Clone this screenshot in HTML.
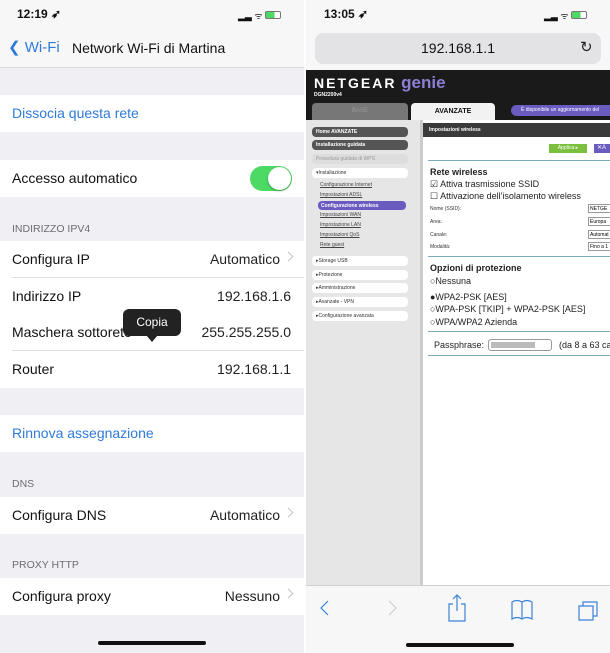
<!DOCTYPE html>
<html><head><meta charset="utf-8"><style>
*{margin:0;padding:0;box-sizing:border-box}
body{width:610px;height:653px;overflow:hidden;font-family:"Liberation Sans",sans-serif;background:#fff;position:relative}
.abs{position:absolute}
#L{left:0;top:0;width:304px;height:653px;background:#efeff4}
.row{position:absolute;left:0;width:304px;height:37px;background:#fff;font-size:14px;color:#111}
.row .t{position:absolute;left:12px;top:10px}
.row .v{position:absolute;right:13px;top:10px;color:#222}
.row .v.c{right:24px}
.row .ch{position:absolute;right:12px;top:12px;width:7px;height:7px;border-right:1.5px solid #c4c4c8;border-top:1.5px solid #c4c4c8;transform:rotate(45deg)}
.sep{position:absolute;left:12px;right:0;bottom:0;height:1px;background:#e0e0e3}
.hd{position:absolute;left:12px;font-size:10.5px;color:#6d6d72}
.blue{color:#2f7ad8!important}
#R{left:306px;top:0;width:304px;height:653px;background:#f7f7f7}
.side{position:absolute;left:6px;width:96px;height:10px;border-radius:4px;font-size:5px;padding:2px 4px;line-height:6px}
.sl{position:absolute;left:14px;font-size:5px;color:#444;text-decoration:underline}
</style></head><body>
<div id="L" class="abs">
 <div class="abs" style="left:0;top:0;width:304px;height:68px;background:#f7f7f7;border-bottom:1px solid #d8d8d8"></div>
 <div class="abs" style="left:17px;top:7px;font-size:12px;font-weight:bold;color:#111">12:19 ➶</div>
 <div class="abs" style="left:238px;top:9px;font-size:9px;color:#111">▂▃ ᯤ <span style="display:inline-block;width:16px;height:8px;border:1px solid #777;border-radius:2px;background:linear-gradient(90deg,#4cd964 60%,#fff 60%)"></span></div>
 <div class="abs blue" style="left:8px;top:38px;font-size:15px;">❮ Wi-Fi</div>
 <div class="abs" style="left:72px;top:40px;font-size:14px;color:#111">Network Wi-Fi di Martina</div>
 <div class="row" style="top:95px"><span class="t blue">Dissocia questa rete</span></div>
 <div class="row" style="top:160px"><span class="t">Accesso automatico</span>
  <div class="abs" style="left:250px;top:6px;width:42px;height:25px;border-radius:13px;background:#4cd964"><div class="abs" style="right:1px;top:1px;width:23px;height:23px;border-radius:50%;background:#fff;box-shadow:0 1px 2px rgba(0,0,0,.3)"></div></div></div>
 <div class="hd" style="top:223px">INDIRIZZO IPV4</div>
 <div class="row" style="top:241px"><span class="t">Configura IP</span><span class="v c">Automatico</span><span class="ch"></span><div class="sep"></div></div>
 <div class="row" style="top:278px"><span class="t">Indirizzo IP</span><span class="v">192.168.1.6</span><div class="sep"></div></div>
 <div class="row" style="top:314px"><span class="t">Maschera sottorete</span><span class="v">255.255.255.0</span><div class="sep"></div></div>
 <div class="row" style="top:351px"><span class="t">Router</span><span class="v">192.168.1.1</span></div>
 <div class="abs" style="left:123px;top:309px;width:58px;height:27px;background:#222;border-radius:6px;color:#fff;font-size:12px;text-align:center;line-height:27px">Copia</div>
 <div class="abs" style="left:146px;top:335px;width:0;height:0;border-left:6px solid transparent;border-right:6px solid transparent;border-top:7px solid #222"></div>
 <div class="row" style="top:415px"><span class="t blue">Rinnova assegnazione</span></div>
 <div class="hd" style="top:478px">DNS</div>
 <div class="row" style="top:497px"><span class="t">Configura DNS</span><span class="v c">Automatico</span><span class="ch"></span></div>
 <div class="hd" style="top:559px">PROXY HTTP</div>
 <div class="row" style="top:578px"><span class="t">Configura proxy</span><span class="v c">Nessuno</span><span class="ch"></span></div>
 <div class="abs" style="left:98px;top:641px;width:108px;height:4px;border-radius:2px;background:#111"></div>
</div>
<div class="abs" style="left:304px;top:0;width:2px;height:653px;background:#fff"></div>
<div id="R" class="abs">
 <div class="abs" style="left:18px;top:7px;font-size:12px;font-weight:bold;color:#111">13:05 ➶</div>
 <div class="abs" style="left:238px;top:9px;font-size:9px;color:#111">▂▃ ᯤ <span style="display:inline-block;width:16px;height:8px;border:1px solid #777;border-radius:2px;background:linear-gradient(90deg,#4cd964 60%,#fff 60%)"></span></div>
 <div class="abs" style="left:9px;top:33px;width:286px;height:31px;border-radius:8px;background:#e3e3e6;text-align:center;font-size:14px;line-height:31px;color:#111">192.168.1.1</div>
 <div class="abs" style="left:274px;top:38px;font-size:15px;color:#222">↻</div>
 <div class="abs" style="left:0;top:70px;width:304px;height:515px;background:#fff;overflow:hidden">
  <div class="abs" style="left:0;top:0;width:304px;height:50px;background:#1a1a1a"></div>
  <div class="abs" style="left:8px;top:3px;font-size:14px;font-weight:bold;color:#fff;letter-spacing:2px">NETGEAR<span style="color:#8c7fd4;letter-spacing:0;font-size:17px"> genie</span></div>
  <div class="abs" style="left:8px;top:22px;font-size:5px;color:#fff;font-weight:bold">DGN2200v4</div>
  <div class="abs" style="left:6px;top:33px;width:96px;height:17px;background:#777;border-radius:4px 4px 0 0;font-size:6px;color:#999;text-align:center;line-height:17px">BASE</div>
  <div class="abs" style="left:105px;top:33px;width:84px;height:17px;background:#f2f2f2;border-radius:4px 4px 0 0;font-size:7px;font-weight:bold;text-align:center;line-height:17px;color:#111">AVANZATE</div>
  <div class="abs" style="left:205px;top:35px;width:110px;height:11px;background:#6a5bc0;border-radius:6px;font-size:5px;color:#fff;line-height:11px;padding-left:10px">È disponibile un aggiornamento del</div>
  <div class="abs" style="left:0;top:50px;width:114px;height:465px;background:#e6e6e6"></div>
  <div class="abs" style="left:114px;top:50px;width:3px;height:465px;background:#ccc"></div>
  <div class="side" style="top:57px;background:#555;color:#fff;font-weight:bold">Home AVANZATE</div>
  <div class="side" style="top:70px;background:#555;color:#fff;font-weight:bold">Installazione guidata</div>
  <div class="side" style="top:84px;background:#ddd;color:#999">Procedura guidata di WPS</div>
  <div class="side" style="top:98px;background:#fff;color:#333">▾Installazione</div>
  <div class="sl" style="top:112px">Configurazione Internet</div>
  <div class="sl" style="top:122px">Impostazioni ADSL</div>
  <div class="abs" style="left:12px;top:131px;width:88px;height:9px;border-radius:4px;background:#6a5bc0;color:#fff;font-size:5px;font-weight:bold;padding:2px 3px">Configurazione wireless</div>
  <div class="sl" style="top:142px">Impostazioni WAN</div>
  <div class="sl" style="top:152px">Impostazione LAN</div>
  <div class="sl" style="top:162px">Impostazioni QoS</div>
  <div class="sl" style="top:172px">Rete guest</div>
  <div class="side" style="top:186px;background:#fff;color:#333">▸Storage USB</div>
  <div class="side" style="top:200px;background:#fff;color:#333">▸Protezione</div>
  <div class="side" style="top:213px;background:#fff;color:#333">▸Amministrazione</div>
  <div class="side" style="top:227px;background:#fff;color:#333">▸Avanzate - VPN</div>
  <div class="side" style="top:241px;background:#fff;color:#333">▸Configurazione avanzata</div>
  <div class="abs" style="left:117px;top:53px;width:187px;height:14px;background:#3a3a3a;color:#fff;font-size:5px;font-weight:bold;padding:4px 6px">Impostazioni wireless</div>
  <div class="abs" style="left:243px;top:74px;width:38px;height:9px;background:#7cbf3f;color:#fff;font-size:5px;text-align:center;line-height:9px">Applica ▸</div>
  <div class="abs" style="left:288px;top:74px;width:20px;height:9px;background:#6a5bc0;color:#fff;font-size:6px;line-height:9px;padding-left:3px">✕A</div>
  <div class="abs" style="left:122px;top:90px;width:182px;height:1px;background:#7ab"></div>
  <div class="abs" style="left:124px;top:97px;font-size:9px;font-weight:bold;color:#222">Rete wireless</div>
  <div class="abs" style="left:124px;top:109px;font-size:9px;color:#222">☑ Attiva trasmissione SSID</div>
  <div class="abs" style="left:124px;top:121px;font-size:9px;color:#222">☐ Attivazione dell'isolamento wireless</div>
  <div class="abs" style="left:124px;top:136px;font-size:5px;color:#333">Nome (SSID):</div>
  <div class="abs" style="left:124px;top:149px;font-size:5px;color:#333">Area:</div>
  <div class="abs" style="left:124px;top:162px;font-size:5px;color:#333">Canale:</div>
  <div class="abs" style="left:124px;top:174px;font-size:5px;color:#333">Modalità:</div>
  <div class="abs" style="left:282px;top:134px;width:30px;height:9px;border:1px solid #999;font-size:5px;padding:1px">NETGE</div>
  <div class="abs" style="left:282px;top:147px;width:30px;height:9px;border:1px solid #999;font-size:5px;padding:1px">Europa</div>
  <div class="abs" style="left:282px;top:160px;width:30px;height:9px;border:1px solid #999;font-size:5px;padding:1px">Automat</div>
  <div class="abs" style="left:282px;top:172px;width:30px;height:9px;border:1px solid #999;font-size:5px;padding:1px">Fino a 1</div>
  <div class="abs" style="left:122px;top:186px;width:182px;height:1px;background:#7ab"></div>
  <div class="abs" style="left:124px;top:193px;font-size:9px;font-weight:bold;color:#222">Opzioni di protezione</div>
  <div class="abs" style="left:124px;top:206px;font-size:9px;color:#222">○Nessuna</div>
  <div class="abs" style="left:124px;top:222px;font-size:9px;color:#222">●WPA2-PSK [AES]</div>
  <div class="abs" style="left:124px;top:234px;font-size:9px;color:#222">○WPA-PSK [TKIP] + WPA2-PSK [AES]</div>
  <div class="abs" style="left:124px;top:247px;font-size:9px;color:#222">○WPA/WPA2 Azienda</div>
  <div class="abs" style="left:122px;top:261px;width:182px;height:1px;background:#7ab"></div>
  <div class="abs" style="left:128px;top:270px;font-size:9px;color:#222">Passphrase:</div>
  <div class="abs" style="left:182px;top:269px;width:64px;height:12px;border:1px solid #999;border-radius:3px;background:#fff"><div style="margin:2px;width:44px;height:6px;background:#bbb"></div></div>
  <div class="abs" style="left:253px;top:270px;font-size:9px;color:#222;white-space:nowrap">(da 8 a 63 ca</div>
  <div class="abs" style="left:122px;top:285px;width:182px;height:1px;background:#7ab"></div>
 </div>
 <div class="abs" style="left:0;top:585px;width:304px;height:1px;background:#d0d0d0"></div>
 <svg class="abs" style="left:0;top:590px" width="304" height="40" fill="none" stroke="#3b82d8" stroke-width="1.2">
  <path d="M22 11 L15 18 L22 25"/>
  <path d="M83 11 L90 18 L83 25" stroke="#ccc"/>
  <path d="M147 14 H143 V31 H159 V14 H155 M151 5 V21 M147 9 L151 5 L155 9"/>
  <path d="M206 12 Q211 9 216 12 Q221 9 226 12 V29 Q221 26 216 29 Q211 26 206 29 Z M216 12 V29"/>
  <path d="M273 16 H287 V30 H273 Z M277 16 V12 H291 V26 H287"/>
 </svg>
 <div class="abs" style="left:100px;top:643px;width:108px;height:4px;border-radius:2px;background:#111"></div>
</div>
</body></html>
